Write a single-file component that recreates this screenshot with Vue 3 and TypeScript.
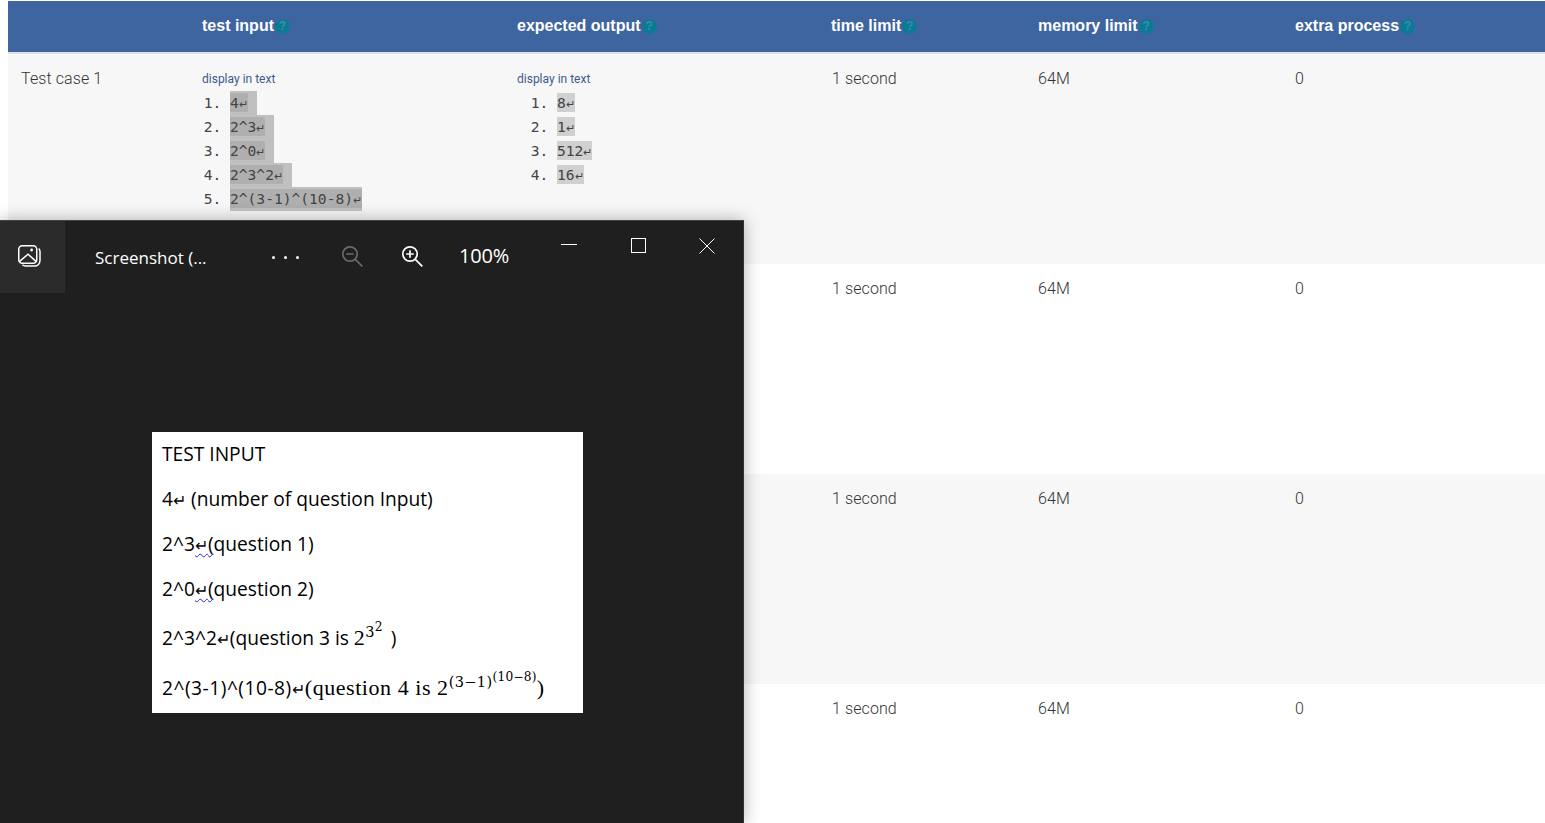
<script setup lang="ts">
const headers = ['', 'test input', 'expected output', 'time limit', 'memory limit', 'extra process']
const inputLines = ['4', '2^3', '2^0', '2^3^2', '2^(3-1)^(10-8)']
const outputLines = ['8', '1', '512', '16']
const rows = [0, 1, 2, 3]
</script>

<template>
  <div class="page">
    <div class="table">
      <div class="thead">
        <div v-for="(h, i) in headers" :key="i" class="th">
          <template v-if="h">
            <span>{{ h }}</span><span class="help">?</span>
          </template>
        </div>
      </div>
      <div v-for="r in rows" :key="r" class="tr" :class="{ odd: r % 2 === 0 }">
        <div class="td"><span v-if="r === 0">Test case 1</span></div>
        <div class="td">
          <template v-if="r === 0">
            <a class="display">display in text</a>
            <ol class="code">
              <li v-for="(l, i) in inputLines" :key="i">
                <span class="sel" :class="'sel' + i"><span class="inner">{{ l }}<i class="ret">↵</i></span></span>
              </li>
            </ol>
          </template>
        </div>
        <div class="td">
          <template v-if="r === 0">
            <a class="display">display in text</a>
            <ol class="code out">
              <li v-for="(l, i) in outputLines" :key="i">
                <span class="inner light">{{ l }}<i class="ret">↵</i></span>
              </li>
            </ol>
          </template>
        </div>
        <div class="td t2">1 second</div>
        <div class="td t2 t3">64M</div>
        <div class="td t2 t3">0</div>
      </div>
    </div>

    <div class="window">
      <div class="titlebar">
        <div class="appicon">
          <svg width="24" height="24" viewBox="0 0 24 24" fill="none" stroke="#fff" stroke-width="1.5">
            <rect x="1.75" y="1.75" width="18" height="17.5" rx="3.5" />
            <path d="M21.7 4.5c.8.8 1.3 1.8 1.3 3v8.7c0 3.4-2.3 5.8-5.6 5.8H8.5c-1.3 0-2.3-.4-3.2-1.2" />
            <circle cx="14.6" cy="6" r="1.4" fill="#fff" stroke="none" />
            <path d="M2.6 17.4 11 10.2l8 7.2" />
          </svg>
        </div>
        <div class="name">Screenshot (...</div>
        <div class="dots"><i></i><i></i><i></i></div>
        <svg class="zoomout" width="24" height="24" viewBox="0 0 24 24" fill="none" stroke="#6b6b6b" stroke-width="1.7">
          <circle cx="10" cy="10" r="7.2" /><path d="M6.2 10h7.6M15.3 15.3l7 7" />
        </svg>
        <svg class="zoomin" width="24" height="24" viewBox="0 0 24 24" fill="none" stroke="#fff" stroke-width="1.7">
          <circle cx="10" cy="10" r="7.2" /><path d="M6.2 10h7.6M10 6.2v7.6M15.3 15.3l7 7" />
        </svg>
        <div class="pct">100%</div>
        <div class="winbtns">
          <svg class="wmin" width="16" height="16" viewBox="0 0 16 16" stroke="#fff" fill="none"><path d="M0 6.5h16" /></svg>
          <svg class="wmax" width="16" height="16" viewBox="0 0 16 16" stroke="#fff" fill="none"><rect x="0.5" y="0.5" width="14" height="14" /></svg>
          <svg width="16" height="16" viewBox="0 0 16 16" stroke="#fff" fill="none"><path d="M.5.5l15 15M15.5.5l-15 15" /></svg>
        </div>
      </div>
      <div class="canvas">
        <div class="doc">
          <p class="l">TEST INPUT</p>
          <p class="l">4<i class="dret">↵</i> (number of question Input)</p>
          <p class="l">2^3<span class="sq"><i class="dret">↵</i>(</span>question 1)</p>
          <p class="l">2^0<span class="sq"><i class="dret">↵</i>(</span>question 2)</p>
          <p class="l l4">2^3^2<i class="dret">↵</i>(question 3 is <span class="m">2<sup class="s1">3<sup class="s2">2</sup></sup></span><span class="close">)</span></p>
          <p class="l l5"><span class="wide">2^(3-1)^(10-8)</span><i class="dret">↵</i><span class="m wide2">(question 4 is 2<sup class="s1">(3−1)<sup class="s2">(10−8)</sup></sup>)</span></p>
        </div>
      </div>
    </div>
  </div>
</template>

<style scoped>
.page {
  position: relative;
  height: 823px;
  overflow: hidden;
  padding: 1px 0 0 8px;
  box-sizing: border-box;
  background: #fff;
  font-family: Roboto, "Liberation Sans", sans-serif;
  color: #444;
}
.thead,
.tr {
  display: grid;
  grid-template-columns: 181px 315px 314px 207px 257px 1fr;
}
.thead {
  height: 51px;
  background: #3e65a0;
  border-bottom: 2px solid #dee2e6;
}
.th {
  padding: 15px 0 0 13px;
  font: bold 16px/19px "Liberation Sans", Arial, sans-serif;
  color: #fff;
  display: flex;
  align-items: flex-start;
}
.help {
  flex: none;
  width: 15px;
  height: 15px;
  margin: 3px 0 0 1px;
  border-radius: 50%;
  background: #0b7a95;
  color: #3f8aa8;
  font: bold 12px/15px "Liberation Sans", sans-serif;
  text-align: center;
}
.tr {
  height: 210px;
  background: #fff;
}
.tr.odd {
  background: #f7f7f7;
}
.td {
  padding: 15px 0 0 13px;
  font-size: 16px;
  line-height: 19px;
  font-weight: 300;
  letter-spacing: 0.1px;
  color: #333;
}
.td.t2 {
  padding-left: 14px;
}
.td.t3 {
  padding-left: 13px;
}
.display {
  display: block;
  font: 12px/16px Roboto, sans-serif;
  letter-spacing: 0;
  color: #3d5a8e;
  margin-top: 2px;
}
.code {
  margin: 4px 0 0;
  padding: 0 0 0 28px;
  font: 400 14.6px/24px "DejaVu Sans Mono", monospace;
  letter-spacing: 0;
  color: #444;
  list-style: decimal;
}
.code.out {
  padding-left: 40px;
}
.code li {
  height: 24px;
  white-space: nowrap;
}
.sel {
  display: inline-block;
  height: 24px;
  background: #c0c0c0;
  vertical-align: top;
}
.sel0 { width: 27px; }
.sel1 { width: 44px; }
.sel2 { width: 44px; }
.sel3 { width: 62px; }
.sel4 { width: 132px; }
.inner {
  display: inline-block;
  height: 19px;
  margin-top: 2px;
  line-height: 19px;
  background: #afafaf;
  vertical-align: top;
}
.inner.light {
  background: #d0d0d0;
}
.ret {
  font-style: normal;
  font-size: 11px;
  font-family: "Liberation Sans", sans-serif;
  display: inline-block;
  width: 9px;
  line-height: 0;
  text-align: center;
  color: #444;
}
.window {
  position: absolute;
  left: 0;
  top: 220px;
  width: 744px;
  height: 603px;
  background: #1f1f1f;
  border-top: 1px solid #444;
  border-right: 1px solid #333;
  box-sizing: border-box;
  box-shadow: 0 0 16px rgba(0, 0, 0, 0.3);
  font-family: "Open Sans", sans-serif;
  color: #fff;
}
.titlebar {
  display: flex;
  align-items: flex-start;
  height: 72px;
}
.appicon {
  width: 65px;
  height: 72px;
  background: #2b2b2b;
  display: flex;
  padding: 23px 0 0 17px;
  box-sizing: border-box;
}
.name {
  margin: 26px 0 0 30px;
  width: 177px;
  font-size: 17px;
  line-height: 22px;
}
.dots {
  display: flex;
  gap: 9px;
  margin-top: 35px;
  width: 68px;
}
.dots i {
  width: 3px;
  height: 3px;
  border-radius: 50%;
  background: #fff;
}
.zoomout {
  margin-top: 23px;
  width: 24px;
}
.zoomin {
  margin: 23px 0 0 36px;
}
.pct {
  margin: 23px 0 0 35px;
  font-size: 20px;
  line-height: 24px;
  letter-spacing: -0.2px;
  width: 52px;
}
.winbtns {
  display: flex;
  margin: 17px 0 0 50px;
}
.wmin {
  margin-right: 54px;
}
.wmax {
  margin-right: 52px;
}
.canvas {
  padding: 139px 0 0 152px;
}
.doc {
  width: 431px;
  height: 281px;
  background: #fff;
  color: #000;
  padding: 10px 0 0 10px;
  box-sizing: border-box;
  font-family: "Open Sans", sans-serif;
}
.l {
  margin: 0 0 22px;
  height: 23px;
  font-size: 19.2px;
  line-height: 23px;
  white-space: nowrap;
}
.l4 {
  margin-top: 26px;
  margin-bottom: 27px;
}
.dret {
  font-style: normal;
  font-size: 16px;
  line-height: 0;
  font-family: "Liberation Sans", sans-serif;
}
.sq {
  text-decoration: underline wavy #2222ee 1px;
  text-decoration-skip-ink: none;
  text-underline-offset: 2px;
}
.wide {
  letter-spacing: 0.5px;
}
.m {
  font-family: "Liberation Serif", serif;
  font-size: 22px;
  letter-spacing: 0.3px;
}
.wide2 {
  letter-spacing: 0.55px;
}
.close {
  margin-left: 8px;
}
.s1 {
  font-family: "DejaVu Serif", serif;
  font-size: 14.5px;
  letter-spacing: 0.4px;
  vertical-align: 8px;
  line-height: 0;
}
.s2 {
  font-size: 12.2px;
  letter-spacing: 0.2px;
  vertical-align: 6px;
  line-height: 0;
}
</style>

<style>
html, body { margin: 0; }
</style>
